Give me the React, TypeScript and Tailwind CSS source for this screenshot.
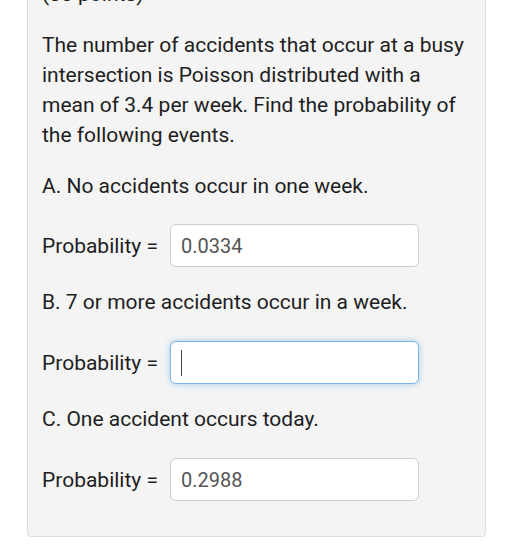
import React from "react";

function Row({ value, focused }: { value?: string; focused?: boolean }) {
  return (
    <div className="flex items-center">
      <span className="w-[128px] whitespace-nowrap">Probability =</span>
      <div
        className={
          focused
            ? "flex h-[43px] w-[249px] items-center rounded-[6px] border border-[#7fb2e5] bg-white pl-[10px] shadow-[0_0_6px_rgba(102,175,233,0.6)]"
            : "flex h-[43px] w-[249px] items-center rounded-[6px] border border-[#cfcfcf] bg-white pl-[10px]"
        }
      >
        {focused ? (
          <span className="block h-[26px] w-[1px] bg-[#444]" />
        ) : (
          <span className="text-[20px] text-[#555555]">{value}</span>
        )}
      </div>
    </div>
  );
}

export default function App() {
  return (
    <div
      className="h-[553px] w-[505px] overflow-hidden bg-white text-[21px] leading-[30px] text-[#1e1e1e]"
      style={{ fontFamily: "Roboto, 'Liberation Sans', sans-serif" }}
    >
      <div className="ml-[27px] mt-[-40px] w-[459px] rounded-[4px] border border-[#dcdcdc] bg-[#f4f4f4] pb-[35px] pl-[14px] pr-[14px] pt-[18px]">
        <p>(30 points)</p>
        <p className="mt-[21px]">
          The number of accidents that occur at a busy intersection is Poisson distributed with a mean of 3.4 per week. Find the probability of the following events.
        </p>
        <p className="mt-[21px]">A. No accidents occur in one week.</p>
        <div className="mt-[23px]">
          <Row value="0.0334" />
        </div>
        <p className="mt-[20px]">B. 7 or more accidents occur in a week.</p>
        <div className="mt-[24px]">
          <Row focused />
        </div>
        <p className="mt-[20px]">C. One accident occurs today.</p>
        <div className="mt-[24px]">
          <Row value="0.2988" />
        </div>
      </div>
    </div>
  );
}
